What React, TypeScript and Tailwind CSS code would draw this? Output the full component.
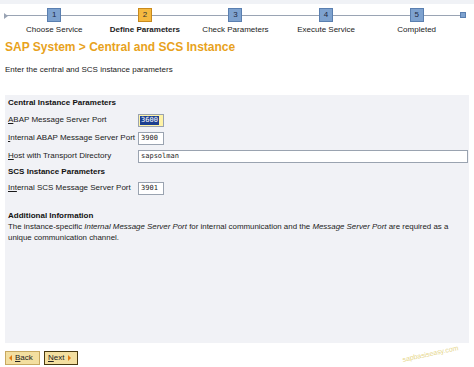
import React from "react";

const steps = [
  { n: "1", label: "Choose Service", active: false },
  { n: "2", label: "Define Parameters", active: true },
  { n: "3", label: "Check Parameters", active: false },
  { n: "4", label: "Execute Service", active: false },
  { n: "5", label: "Completed", active: false },
];

const mono = { fontFamily: '"DejaVu Sans Mono", "Liberation Mono", monospace' };

function Field({ label, ul, value, wide, focus }: { label: string; ul: string; value: string; wide?: boolean; focus?: boolean }) {
  const rest = label.slice(ul.length);
  return (
    <div className="flex items-center h-[18px]">
      <div className="w-[130px] text-[8px] text-[#1a1a1a]">
        <span className="underline">{ul}</span>
        {rest}
      </div>
      {focus ? (
        <div className="h-[13px] w-[26px] border border-[#9aa3b0] bg-[#fff3a6] flex items-center pl-[1px]">
          <span className="bg-[#1c3f8f] text-white text-[7px] leading-[9px] px-[1px]" style={mono}>3600</span>
        </div>
      ) : (
        <div
          className={`h-[13px] border border-[#9aa3b0] bg-white flex items-center pl-[2px] text-[7px] text-[#222] ${wide ? "w-[330px]" : "w-[26px]"}`}
          style={mono}
        >
          {value}
        </div>
      )}
    </div>
  );
}

export default function App() {
  return (
    <div className="w-[474px] h-[367px] bg-white relative overflow-hidden" style={{ fontFamily: '"Liberation Sans", Arial, sans-serif' }}>
      <div className="h-[4px] bg-[#f0f2f6]" />
      {/* Stepper */}
      <div className="relative h-[34px]">
        <div className="absolute left-[5px] right-[9px] top-[11px] h-[1px] bg-[#9aa4b4]" />
        <div className="absolute left-[4px] top-[9px] w-0 h-0 border-y-[3px] border-y-transparent border-l-[4px] border-l-[#9aa4b4]" />
        <div className="absolute left-[460px] top-[8px] w-[6px] h-[6px] bg-[#7ea2cf] border border-[#5a7fb0]" />
        <div className="relative grid grid-cols-5 pl-[9px] w-[462px]">
          {steps.map((s) => (
            <div key={s.n} className="flex flex-col items-center">
              <div
                className={`mt-[4px] w-[14px] h-[14px] flex items-center justify-center text-[8px] border ${
                  s.active ? "bg-[#f5b940] border-[#c98a1c] text-[#333]" : "bg-[#7ea2cf] border-[#5a7fb0] text-[#1e2a44]"
                }`}
              >
                {s.n}
              </div>
              <div className={`mt-[3px] text-[8px] leading-[10px] text-[#222] whitespace-nowrap ${s.active ? "font-bold" : ""}`}>{s.label}</div>
            </div>
          ))}
        </div>
      </div>
      {/* Title */}
      <div className="px-[5px] mt-[1px] text-[12px] leading-[16px] font-bold text-[#e8a21c]">SAP System &gt; Central and SCS Instance</div>
      <div className="px-[5px] mt-[10px] text-[8px] leading-[10px] text-[#222]">Enter the central and SCS instance parameters</div>
      {/* Panel */}
      <div className="mx-[5px] mt-[20px] h-[248px] bg-[#f1f2f6] pl-[3px] pt-[3px]">
        <div className="text-[8px] leading-[10px] font-bold text-[#111] mb-[3px]">Central Instance Parameters</div>
        <Field label="ABAP Message Server Port" ul="A" value="3600" focus />
        <Field label="Internal ABAP Message Server Port" ul="I" value="3900" />
        <Field label="Host with Transport Directory" ul="H" value="sapsolman" wide />
        <div className="text-[8px] leading-[10px] font-bold text-[#111] mt-[2px] mb-[2px]">SCS Instance Parameters</div>
        <Field label="Internal SCS Message Server Port" ul="Int" value="3901" />
        <div className="mt-[13px] text-[8px] leading-[11px] font-bold text-[#111]">Additional Information</div>
        <div className="text-[7.9px] leading-[11px] text-[#222] pr-[10px]">
          The instance-specific <i>Internal Message Server Port</i> for internal communication and the <i>Message Server Port</i> are required as a unique communication channel.
        </div>
      </div>
      {/* Buttons */}
      <div className="flex gap-[4px] px-[5px] mt-[8px]">
        <div className="h-[14px] w-[35px] bg-[#f3dfa0] border border-[#c7a860] flex items-center gap-[3px] pl-[3px] text-[8px] text-[#222]">
          <span className="w-0 h-0 border-y-[3px] border-y-transparent border-r-[3px] border-r-[#e07a10]" />
          <span><span className="underline">B</span>ack</span>
        </div>
        <div className="h-[14px] w-[34px] bg-[#f3dfa0] border border-[#4a3a10] flex items-center gap-[4px] pl-[3px] text-[8px] text-[#222]">
          <span><span className="underline">N</span>ext</span>
          <span className="w-0 h-0 border-y-[3px] border-y-transparent border-l-[3px] border-l-[#e07a10]" />
        </div>
      </div>
      <div className="absolute left-[402px] top-[349px] text-[7px] text-[#e6d68a] -rotate-[12deg] whitespace-nowrap">sapbasiseasy.com</div>
    </div>
  );
}
